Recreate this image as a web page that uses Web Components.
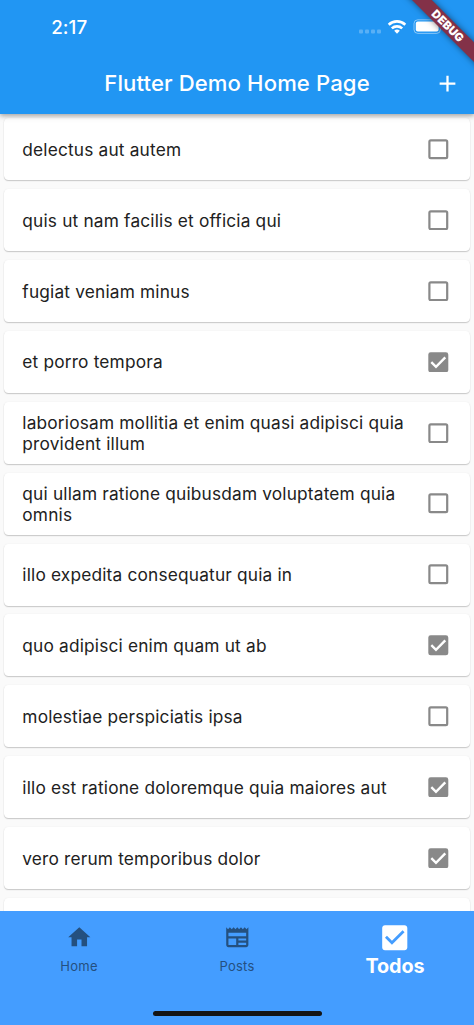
<!DOCTYPE html>
<html lang="en">
<head>
<meta charset="utf-8">
<title>Flutter Demo Home Page</title>
<style>
html,body{margin:0;height:100%;overflow:hidden}
body{font-family:Inter,"Liberation Sans",sans-serif}
</style>
</head>
<body>
<todo-app></todo-app>
<script>
const define = (name, html, setup) => customElements.define(name, class extends HTMLElement {
  constructor() {
    super();
    const t = document.createElement('template');
    t.innerHTML = html;
    this.attachShadow({mode: 'open'}).append(t.content.cloneNode(true));
  }
  connectedCallback() { if (setup) setup(this); }
});

define('status-bar', `<style>
:host{display:flex;height:52px;box-sizing:border-box;padding:0 30px 0 51.2px;align-items:center;justify-content:space-between}
.time{font-size:18.8px;font-weight:500;letter-spacing:.05px;line-height:24px;padding-top:4px}
.icons{display:flex;align-items:center;padding-top:1px}
svg{display:block}
</style>
<span class="time">2:17</span>
<div class="icons"><svg width="86" height="20" viewBox="358 17 86 20" fill="#fff">
<g opacity=".25"><rect x="359" y="29.5" width="4" height="4" rx="1"/><rect x="365" y="29.5" width="4" height="4" rx="1"/><rect x="371" y="29.5" width="4" height="4" rx="1"/><rect x="377" y="29.5" width="4" height="4" rx="1"/></g>
<g fill="none" stroke="#fff" stroke-width="2.6"><path d="M388.7 24.7a12 12 0 0 1 16.6 0"/><path d="M391.8 28.4a7.6 7.6 0 0 1 10.4 0"/></g><path d="M397 33.7l-2.8-2.9a4.2 4.2 0 0 1 5.6 0z"/>
<rect x="414" y="19.8" width="26.4" height="13.6" rx="3.8" fill="none" stroke="#fff" stroke-opacity=".45"/><rect x="415.8" y="21.6" width="22.8" height="10" rx="2"/><path d="M441.7 24.4v4.5a2.4 2.4 0 0 0 0-4.5z" opacity=".45"/></svg></div>`);

define('app-bar', `<style>
:host{display:block;position:relative;z-index:2;height:114px;background:#2196f3;color:#fff;box-shadow:0 2px 4px rgba(0,0,0,.24),0 1px 8px rgba(0,0,0,.16)}
.bar{display:grid;grid-template-columns:53px 1fr 53px;height:62px;align-items:center}
h1{margin:0;grid-column:2;text-align:center;font-size:22.1px;font-weight:500;line-height:28px;letter-spacing:.12px;white-space:nowrap}
svg{display:block;justify-self:center}
</style>
<status-bar></status-bar>
<div class="bar"><h1><slot></slot></h1><svg width="27" height="27" viewBox="0 0 24 24" fill="#fff"><path d="M19 13h-6v6h-2v-6H5v-2h6V5h2v6h6v2z"/></svg></div>`);

define('debug-ribbon', `<style>
:host{position:absolute;z-index:5;top:0;right:0;width:100px;height:100px;overflow:hidden}
div{position:absolute;left:11px;top:19.4px;width:126px;height:13.5px;transform:rotate(45deg);background:#833148;box-shadow:0 0 6px rgba(0,0,0,.5);color:#fff;font-size:11.4px;font-weight:900;letter-spacing:.1px;line-height:14px;text-align:center}
</style><div><slot></slot></div>`);

define('todo-card', `<style>
:host{display:flex;box-sizing:border-box;height:62.02px;margin:0 4.43px 8.86px;padding:0 20.6px 0 17.9px;align-items:center;justify-content:space-between;background:#fff;border-radius:4.4px;box-shadow:0 1px 1.2px rgba(0,0,0,.2),0 0 2px rgba(0,0,0,.05);flex:none}
.text{font-size:17.3px;line-height:21px;color:#212121;letter-spacing:.18px;white-space:pre-line}
svg{display:block;width:20.6px;height:20.6px;flex:none}
.on,:host([checked]) .off{display:none}
:host([checked]) .on{display:inline}
</style><span class="text"><slot></slot></span><svg viewBox="0 0 20.6 20.6" fill="none"><rect class="off" x="1.4" y="1.4" width="17.8" height="17.8" rx="1.4" stroke="#898989" stroke-width="2.2"/><g class="on"><rect x=".3" y=".3" width="20" height="20" rx="2.4" fill="#898989"/><path d="M3.3 10.2l4.7 4.7 9.3-9.5" stroke="#fff" stroke-width="2.4"/></g></svg>`);

define('nav-item', `<style>
:host{display:flex;flex-direction:column;align-items:center;color:#24507f}
.icon{display:flex;height:34px;align-items:center}
::slotted(svg){display:block;width:26.6px;height:26.6px}
.label{font-size:13px;line-height:20px;letter-spacing:.25px;margin-top:1.5px}
:host([selected]){color:#fff}
:host([selected]) ::slotted(svg){width:33.5px;height:33.5px}
:host([selected]) .label{font-size:19.8px;font-weight:700;line-height:24px;margin-top:-.5px;letter-spacing:-.1px}
</style><span class="icon"><slot name="icon"></slot></span><span class="label"><slot></slot></span>`);

define('bottom-nav', `<style>
:host{position:relative;z-index:2;display:flex;flex-direction:column;justify-content:space-between;box-sizing:border-box;height:114px;padding:9.5px 0 9px;background:#449dff}
.items{display:grid;grid-template-columns:repeat(3,1fr)}
.home{width:169px;height:5.5px;border-radius:3px;background:#141414;align-self:center}
</style><div class="items"><slot></slot></div><div class="home"></div>`);

define('todo-app', `<style>
:host{display:flex;flex-direction:column;position:relative;width:474px;height:1025px;overflow:hidden;background:#fafafa}
main{flex:1;min-height:0;overflow:hidden;display:flex;flex-direction:column;padding-top:4.3px}
</style>
<app-bar>Flutter Demo Home Page</app-bar>
<main></main>
<bottom-nav>
<nav-item><svg slot="icon" viewBox="0 0 24 24" fill="currentColor"><path d="M10 20v-6h4v6h5v-8h3L12 3 2 12h3v8z"/></svg>Home</nav-item>
<nav-item><svg slot="icon" viewBox="0 0 24 24" fill="currentColor"><path d="M22 3l-1.67 1.67L18.67 3 17 4.67 15.33 3l-1.66 1.67L12 3l-1.67 1.67L8.67 3 7 4.67 5.33 3 3.67 4.67 2 3v16c0 1.1.9 2 2 2h16c1.1 0 2-.9 2-2V3zM11 19H4v-6h7v6zm9 0h-7v-2h7v2zm0-4h-7v-2h7v2zm0-4H4V8h16v3z"/></svg>Posts</nav-item>
<nav-item selected><svg slot="icon" viewBox="0 0 24 24" fill="currentColor"><path d="M19 3H5c-1.11 0-2 .9-2 2v14c0 1.1.89 2 2 2h14c1.11 0 2-.9 2-2V5c0-1.1-.89-2-2-2zm-9 14l-5-5 1.41-1.41L10 14.17l7.59-7.59L19 8l-9 9z"/></svg>Todos</nav-item>
</bottom-nav>
<debug-ribbon>DEBUG</debug-ribbon>`, app => {
  const todos = [
    ['delectus aut autem'], ['quis ut nam facilis et officia qui'], ['fugiat veniam minus'],
    ['et porro tempora', 1], ['laboriosam mollitia et enim quasi adipisci quia\nprovident illum'],
    ['qui ullam ratione quibusdam voluptatem quia\nomnis'], ['illo expedita consequatur quia in'],
    ['quo adipisci enim quam ut ab', 1], ['molestiae perspiciatis ipsa'],
    ['illo est ratione doloremque quia maiores aut', 1], ['vero rerum temporibus dolor', 1], ['']
  ];
  const main = app.shadowRoot.querySelector('main');
  for (const [text, done] of todos) {
    const card = document.createElement('todo-card');
    card.textContent = text;
    if (done) card.setAttribute('checked', '');
    main.append(card);
  }
});
</script>
</body>
</html>
